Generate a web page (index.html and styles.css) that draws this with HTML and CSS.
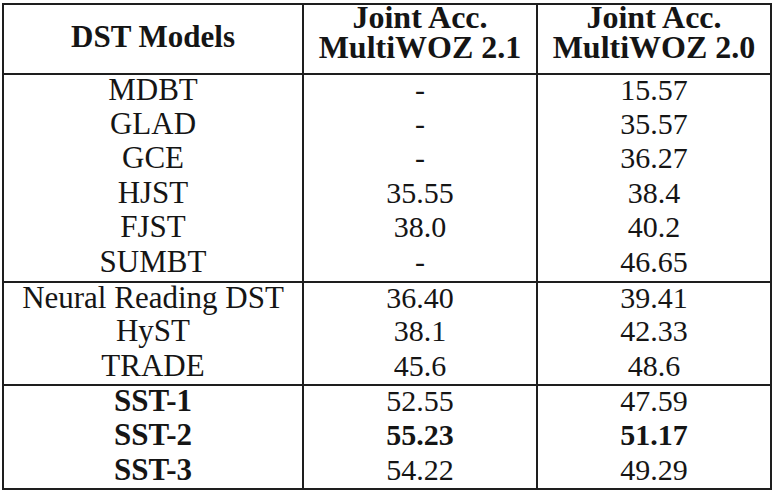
FILE: index.html
```html
<!DOCTYPE html>
<html lang="en">
<head>
    <meta charset="UTF-8">
    <meta name="viewport" content="width=device-width, initial-scale=1.0">
    <title>DST Models</title>
    <link rel="stylesheet" href="styles.css">
</head>
<body>
    <table class="results">
        <thead>
            <tr>
                <th class="col-model">DST Models</th>
                <th class="col-score"><div class="head-text">Joint Acc.<br>MultiWOZ 2.1</div></th>
                <th class="col-score"><div class="head-text">Joint Acc.<br>MultiWOZ 2.0</div></th>
            </tr>
        </thead>
        <!-- baselines -->
        <tbody>
            <tr><td class="name">MDBT</td><td>-</td><td>15.57</td></tr>
            <tr><td class="name">GLAD</td><td>-</td><td>35.57</td></tr>
            <tr><td class="name">GCE</td><td>-</td><td>36.27</td></tr>
            <tr><td class="name">HJST</td><td>35.55</td><td>38.4</td></tr>
            <tr><td class="name">FJST</td><td>38.0</td><td>40.2</td></tr>
            <tr><td class="name">SUMBT</td><td>-</td><td>46.65</td></tr>
        </tbody>
        <tbody>
            <tr><td class="name">Neural Reading DST</td><td>36.40</td><td>39.41</td></tr>
            <tr><td class="name">HyST</td><td>38.1</td><td>42.33</td></tr>
            <tr><td class="name">TRADE</td><td>45.6</td><td>48.6</td></tr>
        </tbody>
        <!-- our models -->
        <tbody>
            <tr><td class="name bold">SST-1</td><td>52.55</td><td>47.59</td></tr>
            <tr><td class="name bold">SST-2</td><td class="bold">55.23</td><td class="bold">51.17</td></tr>
            <tr><td class="name bold">SST-3</td><td>54.22</td><td>49.29</td></tr>
        </tbody>
    </table>
</body>
</html>
```

FILE: styles.css
```css
body {
    margin: 0;
    padding: 3px 0 0 2px;
    background-color: #fff;
    color: #151515;
    font-family: "Liberation Serif", Tinos, "Times New Roman", serif;
}

.results {
    width: 770px;
    border-collapse: collapse;
    border: 2px solid #1e1e1e;
    table-layout: fixed;
}

.results th,
.results td {
    border-left: 2px solid #1e1e1e;
    border-right: 2px solid #1e1e1e;
    padding: 0;
    text-align: center;
    white-space: nowrap;
    font-family: "Liberation Serif", Tinos, "Times New Roman", serif;
}

.results thead tr {
    height: 70px;
}

.results th {
    font-size: 31px;
    font-weight: bold;
    vertical-align: top;
    border-bottom: 2px solid #1e1e1e;
}

.results th.col-model {
    width: 298px;
    vertical-align: middle;
    line-height: 34px;
    padding-bottom: 4px;
}

.results th.col-score {
    font-size: 32px;
    line-height: 30px;
}

.head-text {
    margin-top: -3px;
}

.results tbody tr {
    height: 34.6px;
}

.results td {
    font-size: 30px;
    line-height: 29px;
    vertical-align: top;
}

.results td.name {
    font-size: 31px;
}

.results tbody {
    border-top: 2px solid #1e1e1e;
}

.bold {
    font-weight: bold;
}
```
